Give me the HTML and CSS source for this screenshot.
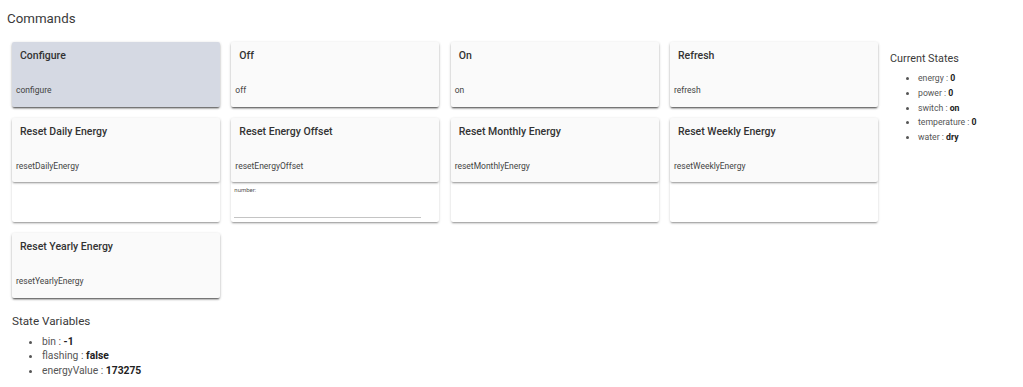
FILE: index.html
```html
<!DOCTYPE html>
<html>
<head>
<meta charset="utf-8">
<link rel="stylesheet" href="styles.css">
</head>
<body>
<div class="page">
  <div class="section-title">Commands</div>
  <div class="main">
    <div class="commands">
      <div class="grid">
        <div class="cell"><div class="cmd-btn active"><div class="cmd-title">Configure</div><div class="cmd-name">configure</div></div></div>
        <div class="cell"><div class="cmd-btn"><div class="cmd-title">Off</div><div class="cmd-name">off</div></div></div>
        <div class="cell"><div class="cmd-btn"><div class="cmd-title">On</div><div class="cmd-name">on</div></div></div>
        <div class="cell"><div class="cmd-btn"><div class="cmd-title">Refresh</div><div class="cmd-name">refresh</div></div></div>
        <div class="cell"><div class="cmd-btn"><div class="cmd-title">Reset Daily Energy</div><div class="cmd-name">resetDailyEnergy</div></div></div>
        <div class="cell"><div class="cmd-btn"><div class="cmd-title">Reset Energy Offset</div><div class="cmd-name">resetEnergyOffset</div></div>
          <div class="params"><div class="param-label">number:</div><div class="param-input"></div></div></div>
        <div class="cell"><div class="cmd-btn"><div class="cmd-title">Reset Monthly Energy</div><div class="cmd-name">resetMonthlyEnergy</div></div></div>
        <div class="cell"><div class="cmd-btn"><div class="cmd-title">Reset Weekly Energy</div><div class="cmd-name">resetWeeklyEnergy</div></div></div>
        <div class="cell"><div class="cmd-btn"><div class="cmd-title">Reset Yearly Energy</div><div class="cmd-name">resetYearlyEnergy</div></div></div>
      </div>
      <div class="vars-title">State Variables</div>
      <ul class="vars-list">
        <li>bin : <b>-1</b></li>
        <li>flashing : <b>false</b></li>
        <li>energyValue : <b>173275</b></li>
      </ul>
    </div>
    <div class="states">
      <div class="states-title">Current States</div>
      <ul class="states-list">
        <li>energy : <b>0</b></li>
        <li>power : <b>0</b></li>
        <li>switch : <b>on</b></li>
        <li>temperature : <b>0</b></li>
        <li>water : <b>dry</b></li>
      </ul>
    </div>
  </div>
</div>
</body>
</html>
```
FILE: styles.css
```css
html, body {
  margin: 0;
  padding: 0;
  background: #ffffff;
  font-family: Roboto, "Liberation Sans", sans-serif;
  color: #333;
}
.page {
  padding-top: 8px;
}
.section-title {
  padding-left: 7px;
  font-size: 13.3px;
  line-height: 22px;
  color: #3a3a3a;
}
.main {
  display: flex;
  padding-left: 12px;
  margin-top: 12px;
}
.commands {
  width: 866px;
}
.grid {
  display: grid;
  grid-template-columns: repeat(4, 1fr);
  column-gap: 11.33px;
  row-gap: 11px;
}
.cell {
  display: flex;
  flex-direction: column;
  background: #fff;
  border-radius: 2px;
  box-shadow: 0 2px 2px -1px rgba(0,0,0,0.35), 0 1px 3px rgba(0,0,0,0.14);
}
.cmd-btn {
  height: 64.5px;
  box-sizing: border-box;
  padding: 8px 4px 0 4px;
  background: #fafafa;
  border-radius: 2px;
  box-shadow: 0 2px 2px -1px rgba(0,0,0,0.35), 0 1px 3px rgba(0,0,0,0.12);
}
.cmd-btn.active {
  background: #d5d9e3;
}
.cmd-title {
  margin-left: 4px;
  font-size: 10.5px;
  font-weight: 500;
  line-height: 12px;
  color: #333;
}
.cmd-name {
  margin-top: 22px;
  font-size: 8.5px;
  line-height: 12px;
  color: #444;
}
.params {
  padding: 4px 18px 4px 3px;
}
.param-label {
  font-size: 6px;
  line-height: 8px;
  color: #555;
}
.param-input {
  height: 23px;
  border-bottom: 1px solid #c4c4c4;
}
.vars-title {
  margin-top: 15px;
  font-size: 11.7px;
  line-height: 16px;
  color: #3a3a3a;
}
.vars-list {
  margin: 6px 0 0 0;
  padding-left: 30px;
  font-size: 10.3px;
  line-height: 14.5px;
  color: #555;
}
.vars-list b, .states-list b {
  font-weight: 700;
  color: #222;
}
.states {
  margin-left: 12px;
}
.states-title {
  margin-top: 10px;
  font-size: 10.8px;
  line-height: 14px;
  color: #3a3a3a;
}
.states-list {
  margin: 5px 0 0 0;
  padding-left: 28px;
  font-size: 8.7px;
  line-height: 14.75px;
  color: #555;
}
```
